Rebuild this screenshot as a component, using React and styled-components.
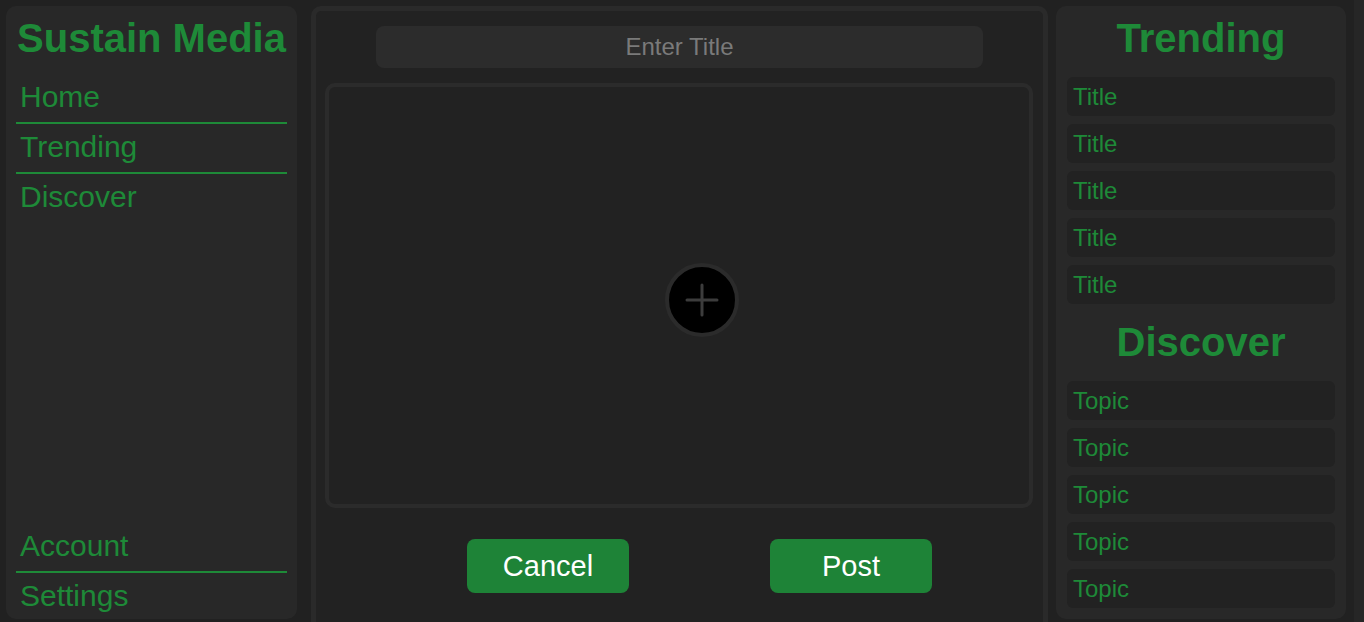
import React from 'react';
import styled, { createGlobalStyle } from 'styled-components';

const green = '#1e8a38';

const GlobalStyle = createGlobalStyle`
  html, body {
    margin: 0;
    padding: 0;
    background: #212121;
    overflow: hidden;
    font-family: "Liberation Sans", Arial, sans-serif;
  }
`;

const Page = styled.div`
  display: flex;
  height: 622px;
  padding-left: 6px;
  box-sizing: border-box;
`;

const Sidebar = styled.nav`
  width: 291px;
  height: 613px;
  margin: 6px 14px 0 0;
  padding: 9px 10px 0;
  box-sizing: border-box;
  background: #282828;
  border-radius: 10px;
  display: flex;
  flex-direction: column;
`;

const Heading = styled.h1`
  margin: ${p => (p.$spaced ? '15px 0 16px' : '0 0 16px')};
  font-size: 40px;
  line-height: 46px;
  font-weight: bold;
  color: ${green};
  text-align: center;
  white-space: nowrap;
`;

const NavGroup = styled.div`
  display: flex;
  flex-direction: column;
  margin-top: ${p => (p.$bottom ? 'auto' : '-3px')};
`;

const NavItem = styled.a`
  display: block;
  padding: 6px 4px 8px;
  font-size: 30px;
  line-height: 34px;
  color: ${green};
  border-bottom: 2px solid ${green};

  &:last-child {
    border-bottom: none;
    padding-bottom: 6px;
  }
`;

const Composer = styled.main`
  width: 737px;
  height: 640px;
  margin: 6px 8px 0 0;
  box-sizing: border-box;
  border: 5px solid #2a2a2a;
  border-radius: 10px;
  background: #222222;
  padding: 15px 10px 0 9px;
  display: flex;
  flex-direction: column;
  align-items: center;
`;

const TitleInput = styled.input`
  width: 607px;
  height: 42px;
  box-sizing: border-box;
  margin-left: 1px;
  border: none;
  outline: none;
  border-radius: 8px;
  background: #2c2c2c;
  text-align: center;
  font-family: inherit;
  font-size: 24px;
  color: #ddd;

  &::placeholder {
    color: #7a7a7a;
  }
`;

const DropZone = styled.label`
  width: 708px;
  height: 425px;
  margin-top: 15px;
  box-sizing: border-box;
  border: 4px solid #2b2b2b;
  border-radius: 10px;
  display: flex;
  align-items: center;
  justify-content: center;
  cursor: pointer;
`;

const PlusCircle = styled.span`
  width: 74px;
  height: 74px;
  margin: 9px 0 0 46px;
  box-sizing: border-box;
  border: 4px solid #2b2b2b;
  border-radius: 50%;
  background: #000;
  display: flex;
  align-items: center;
  justify-content: center;
`;

const ButtonRow = styled.div`
  align-self: stretch;
  display: flex;
  gap: 141px;
  padding-left: 142px;
  margin-top: 31px;
`;

const ActionButton = styled.button`
  width: 162px;
  height: 54px;
  border: none;
  border-radius: 8px;
  background: #1e8337;
  color: #fff;
  font-family: inherit;
  font-size: 29px;
  cursor: pointer;
`;

const SidePanel = styled.aside`
  width: 290px;
  height: 613px;
  margin: 6px 8px 0 0;
  padding: 9px 11px 0;
  box-sizing: border-box;
  background: #282828;
  border-radius: 10px;
`;

const ListItem = styled.div`
  height: 39px;
  margin-bottom: 8px;
  padding-left: 6px;
  border-radius: 6px;
  background: #222222;
  color: ${green};
  font-size: 24px;
  line-height: 39px;
`;

const EdgeStrip = styled.div`
  flex: 1;
  background: #262626;
`;

const trending = ['Title', 'Title', 'Title', 'Title', 'Title'];
const topics = ['Topic', 'Topic', 'Topic', 'Topic', 'Topic'];

export default function App() {
  return (
    <>
      <GlobalStyle />
      <Page>
        <Sidebar>
          <Heading>Sustain Media</Heading>
          <NavGroup>
            <NavItem>Home</NavItem>
            <NavItem>Trending</NavItem>
            <NavItem>Discover</NavItem>
          </NavGroup>
          <NavGroup $bottom>
            <NavItem>Account</NavItem>
            <NavItem>Settings</NavItem>
          </NavGroup>
        </Sidebar>

        <Composer>
          <TitleInput placeholder="Enter Title" />
          <DropZone>
            <PlusCircle>
              <svg width="34" height="34" viewBox="0 0 34 34">
                <path d="M17 2v30M2 17h30" stroke="#3c3c3c" strokeWidth="3" strokeLinecap="round" />
              </svg>
            </PlusCircle>
          </DropZone>
          <ButtonRow>
            <ActionButton>Cancel</ActionButton>
            <ActionButton>Post</ActionButton>
          </ButtonRow>
        </Composer>

        <SidePanel>
          <Heading as="h2">Trending</Heading>
          {trending.map((t, i) => (
            <ListItem key={i}>{t}</ListItem>
          ))}
          <Heading as="h2" $spaced>Discover</Heading>
          {topics.map((t, i) => (
            <ListItem key={i}>{t}</ListItem>
          ))}
        </SidePanel>

        <EdgeStrip />
      </Page>
    </>
  );
}
